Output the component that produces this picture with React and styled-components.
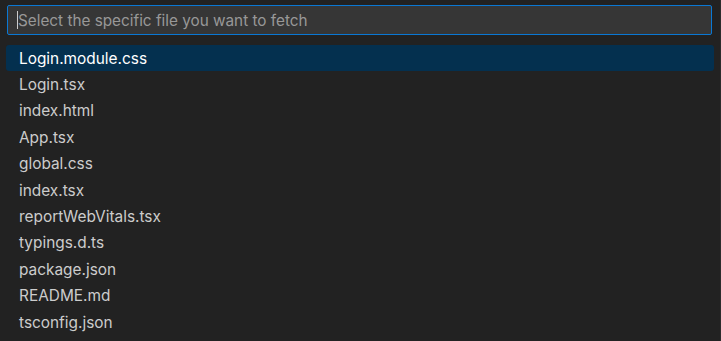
import React from 'react';
import styled, { createGlobalStyle } from 'styled-components';

const files = [
    'Login.module.css',
    'Login.tsx',
    'index.html',
    'App.tsx',
    'global.css',
    'index.tsx',
    'reportWebVitals.tsx',
    'typings.d.ts',
    'package.json',
    'README.md',
    'tsconfig.json',
];

function App() {
    return (
        <>
            <GlobalStyle />
            <Picker>
                <InputBox>
                    <Caret />
                    <Placeholder>Select the specific file you want to fetch</Placeholder>
                </InputBox>
                <List>
                    {files.map((name, i) => (
                        <Row key={name} $active={i === 0}>{name}</Row>
                    ))}
                </List>
            </Picker>
        </>
    );
}

const GlobalStyle = createGlobalStyle`
    html, body {
        margin:0;
        padding:0;
        background:#222222;
    }
    body {
        font-family:Inter, "Liberation Sans", sans-serif;
    }
`;
const Picker = styled.div`
    box-sizing:border-box;
    width:721px;
    height:341px;
    padding:5px 6px 0 6px;
    background:#222222;
    border-right:1px solid #2c2c2c;
    overflow:hidden;
`;
const InputBox = styled.div`
    box-sizing:border-box;
    display:flex;
    align-items:center;
    height:30px;
    margin:0 2px 0 1px;
    padding:0 9px;
    background:#363636;
    border:1px solid #0a78d4;
    border-radius:2px;
`;
const Caret = styled.span`
    width:1px;
    height:18px;
    background:#cccccc;
`;
const Placeholder = styled.span`
    font-size:15.3px;
    color:#989898;
    white-space:nowrap;
`;
const List = styled.div`
    display:flex;
    flex-direction:column;
    margin-top:10px;
`;
const Row = styled.div`
    display:flex;
    align-items:center;
    height:26.4px;
    padding-left:13px;
    border-radius:3px;
    font-size:15.4px;
    color:${p => (p.$active ? '#ffffff' : '#cccccc')};
    background:${p => (p.$active ? '#04304f' : 'transparent')};
    white-space:nowrap;
`;

export default App;
